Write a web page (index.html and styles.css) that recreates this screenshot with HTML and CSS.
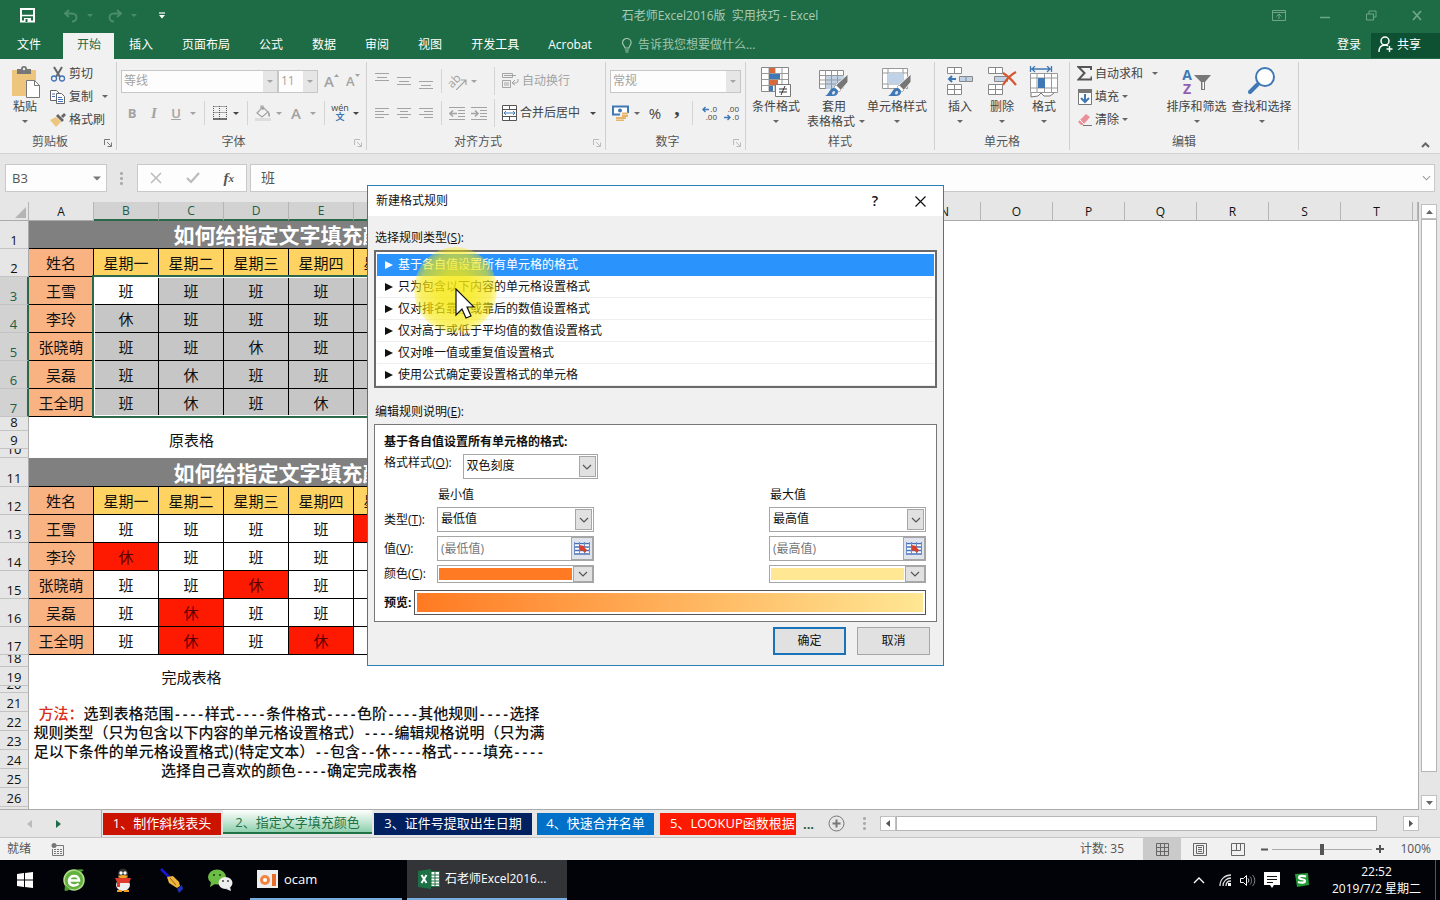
FILE: index.html
```html
<!DOCTYPE html>
<html lang="zh-CN">
<head>
<meta charset="utf-8">
<title>石老师Excel2016版 实用技巧 - Excel</title>
<link rel="stylesheet" href="styles.css">
</head>
<body>
<svg class="defs" aria-hidden="true">
  <symbol id="down" viewBox="0 0 6 3"><path d="M0 0h6L3 3z" fill="currentColor"/></symbol>
  <symbol id="chev" viewBox="0 0 10 6"><path d="M1 1l4 4 4-4" fill="none" stroke="currentColor" stroke-width="1.2"/></symbol>
  <symbol id="launch" viewBox="0 0 8 8"><path d="M.5 6V.5H6M3 3l4 4M7.500 3.500v4h-4" fill="none" stroke="currentColor"/></symbol>
  <symbol id="brushtip" viewBox="0 0 30 32"><path d="M29 8v8l-7 8-5-5z" fill="#777" stroke="#f1f1f1"/><path d="M17 19l5 5-2 2-5-5z" fill="#fff" stroke="#888" stroke-width=".6"/><path d="M6 30c4-1 4-8 9-8 6 1 5 8-1 8z" fill="#3f78b4"/><path d="M13 27c1-3 4-2 3 0s-3 2-3 0" fill="#d5e4f2"/></symbol>
  <symbol id="pickgrid" viewBox="0 0 16 14"><path d="M0 0h16v13H0z" fill="#fff"/><path d="M0 1.500h16M0 5h16M0 8.500h16M0 12h16" stroke="#4570b8" stroke-width="1.500"/><path d="M.5 0v13M5.500 0v13M10.500 0v13M15.500 0v13" stroke="#6b8cc4"/><path d="M5 3l6 1-1 1 3 3-2 3-3-3-2 1z" fill="#d8402b"/></symbol>
</svg>

<header class="top">
  <div class="titlebar">
    <div class="quick">
      <button aria-label="保存"><svg width="15" height="15" viewBox="0 0 15 15"><path d="M1 1h13v12.500H1z" fill="none" stroke="#fff" stroke-width="2"/><path d="M2 7.500h11" stroke="#fff" stroke-width="1.500"/><path d="M4 10h7v4H4z" fill="#fff"/><path d="M5.500 11h2v3h-2z" fill="#1e6c45"/></svg></button>
      <button class="dim" aria-label="撤消"><svg width="16" height="14" viewBox="0 0 16 14"><path d="M6 1L2 4.500 6 8M2 4.500h7c6 0 6 8 0 8" fill="none" stroke="currentColor" stroke-width="2"/></svg><svg class="dn"><use href="#down"/></svg></button>
      <button class="dim" aria-label="恢复"><svg width="16" height="14" viewBox="0 0 16 14"><path d="M10 1l4 3.500L10 8M14 4.500H7c-6 0-6 8 0 8" fill="none" stroke="currentColor" stroke-width="2"/></svg><svg class="dn"><use href="#down"/></svg></button>
      <button class="more" aria-label="自定义快速访问工具栏"><svg width="6" height="7" viewBox="0 0 6 7"><path d="M0 1h6" stroke="#fff" stroke-width="1.200"/><path d="M0 3h6L3 6.500z" fill="#fff"/></svg></button>
    </div>
    <h1>石老师Excel2016版&nbsp; 实用技巧 - Excel</h1>
    <div class="wincontrols">
      <button aria-label="功能区显示选项"><svg width="14" height="11" viewBox="0 0 14 11"><path d="M.5.5h13v10H.5zM.5 2.500h13M7 9V4M4.500 6.500L7 4l2.500 2.500" fill="none" stroke="currentColor"/></svg></button>
      <button aria-label="最小化"><svg width="10" height="11" viewBox="0 0 10 11"><path d="M0 7.500h10" stroke="currentColor" stroke-width="1.500"/></svg></button>
      <button aria-label="还原"><svg width="11" height="11" viewBox="0 0 11 11"><path d="M.5 4h7v6h-7zM3 4V1h7v6H7.500" fill="none" stroke="currentColor"/></svg></button>
      <button aria-label="关闭"><svg width="10" height="11" viewBox="0 0 10 11"><path d="M1 1l8 9M9 1L1 10" stroke="currentColor" stroke-width="1.800"/></svg></button>
    </div>
  </div>
  <nav class="tabs">
    <button class="file">文件</button><button class="on">开始</button><button>插入</button><button>页面布局</button><button>公式</button><button>数据</button><button>审阅</button><button>视图</button><button>开发工具</button><button>Acrobat</button>
    <button class="tell"><svg width="12" height="15" viewBox="0 0 12 15"><path d="M4 10C4 8 1.500 7 1.500 4.800a4.300 4.300 0 0 1 8.600 0C10 7 8 8 8 10zM4 12h4M4.500 14h3" fill="none" stroke="currentColor" stroke-width="1.200"/></svg>告诉我您想要做什么...</button>
    <button class="login">登录</button>
    <button class="share"><svg width="16" height="17" viewBox="0 0 16 17"><circle cx="7" cy="5" r="4" fill="none" stroke="#fff" stroke-width="1.500"/><path d="M1 16c0-4 2-7 6-7 1.500 0 2.500.5 3 1M11.500 10v6M8.500 13h6" fill="none" stroke="#fff" stroke-width="1.400"/></svg>共享</button>
  </nav>
</header>

<section class="ribbon">
  <div class="group g1">
    <div class="body">
      <button class="big paste"><svg width="30" height="32" viewBox="0 0 30 32"><path d="M2 4h24v26H2z" fill="#edc57d"/><path d="M7 3h14v5H7z" fill="#777"/><circle cx="14" cy="3" r="3" fill="#777"/><circle cx="14" cy="3" r="1.200" fill="#f1f1f1"/><path d="M16.500 14.500h8l5 5v12h-13z" fill="#fff" stroke="#777"/><path d="M24.500 14.500v5h5" fill="none" stroke="#777"/></svg><span>粘贴</span><svg class="dn"><use href="#down"/></svg></button>
      <div class="stack">
        <button><svg width="16" height="16" viewBox="0 0 16 16"><path d="M4 1l6 10M12 1L6 11" stroke="#666" stroke-width="2"/><circle cx="4" cy="12.500" r="2.500" fill="none" stroke="#4472b8" stroke-width="1.300"/><circle cx="12" cy="12.500" r="2.500" fill="none" stroke="#4472b8" stroke-width="1.300"/></svg>剪切</button>
        <button><svg width="16" height="16" viewBox="0 0 16 16"><path d="M.5 1.500h6l3 3v7h-9z" fill="#fff" stroke="#666"/><path d="M6.500 4.500h5l3 3v7h-8z" fill="#fff" stroke="#666"/><path d="M2 5h3M2 7.500h3M8 8.500h4M8 10.500h5M8 12.500h5" stroke="#4472b8"/></svg>复制<svg class="dn far"><use href="#down"/></svg></button>
        <button><svg width="16" height="16" viewBox="0 0 16 16"><path d="M0 8l6-3 5 5-5 5z" fill="#edc57d"/><path d="M6 4l2-2 6 6-2 2zM11 4l3-3 2 2-3 3z" fill="#666"/></svg>格式刷</button>
      </div>
    </div>
    <div class="cap">剪贴板<svg class="la"><use href="#launch"/></svg></div>
  </div>

  <div class="group g2">
    <div class="body rows off">
      <div class="line">
        <span class="combo font"><input aria-label="字体" value="等线"><i><svg class="dn"><use href="#down"/></svg></i></span><span class="combo size"><input aria-label="字号" value="11"><i><svg class="dn"><use href="#down"/></svg></i></span>
        <button class="grow" aria-label="增大字号">A<svg width="5" height="3" viewBox="0 0 5 3"><path d="M0 3h5L2.500 0z" fill="currentColor"/></svg></button>
        <button class="grow less" aria-label="减小字号">A<svg width="5" height="3" viewBox="0 0 5 3"><path d="M0 0h5L2.500 3z" fill="currentColor"/></svg></button>
      </div>
      <div class="line">
        <button class="w22"><b>B</b></button><button class="w22 ital">I</button><button class="w22 semi13"><u>U</u></button><button class="w12" aria-label="下划线"><svg class="dn"><use href="#down"/></svg></button><i class="sep m5"></i>
        <button class="w20 live" aria-label="边框"><svg width="14" height="14" viewBox="0 0 14 14"><path d="M.5.5h13M.5 6.500h13M.5 0v13M6.500 0v13M13.500 0v13" stroke="#555" stroke-dasharray="1 1" fill="none"/><path d="M0 13h14" stroke="#444" stroke-width="1.500"/></svg></button><button class="w12 live" aria-label="边框选项"><svg class="dn"><use href="#down"/></svg></button><i class="sep m5"></i>
        <button class="w20" aria-label="填充颜色"><svg width="16" height="16" viewBox="0 0 16 16"><path d="M2 8l6-6 5 5-6 5zM6 5V1h2v4" fill="none" stroke="currentColor" stroke-width="1.200"/><path d="M13 6c2 2 3 5 1 6-1-1-1-3-1-6z" fill="currentColor"/><path d="M0 13h16v3H0z" fill="#ddd"/></svg></button><button class="w12" aria-label="填充选项"><svg class="dn"><use href="#down"/></svg></button>
        <button class="w22 semi">A</button><button class="w12" aria-label="字体颜色"><svg class="dn"><use href="#down"/></svg></button><i class="sep m5"></i>
        <button class="w20 live wen"><span>wén</span><em>文</em></button><button class="w12 live" aria-label="拼音选项"><svg class="dn"><use href="#down"/></svg></button>
      </div>
    </div>
    <div class="cap">字体<svg class="la dimla"><use href="#launch"/></svg></div>
  </div>

  <div class="group g3">
    <div class="body rows off">
      <div class="line">
        <button class="w22" aria-label="顶端对齐"><svg width="14" height="16"><path d="M0 .5h14M2 4.500h10M0 7.500h14" stroke="currentColor"/></svg></button><button class="w22" aria-label="垂直居中"><svg width="14" height="16"><path d="M0 4.500h14M2 8.500h10M0 11.500h14" stroke="currentColor"/></svg></button><button class="w22" aria-label="底端对齐"><svg width="14" height="16"><path d="M0 8.500h14M2 12.500h10M0 15.500h14" stroke="currentColor"/></svg></button><i class="sep m4"></i>
        <button class="w44" aria-label="方向"><span class="slant">ab</span><svg class="slantarrow" width="11" height="11" viewBox="0 0 11 11"><path d="M0 11L10 1M5 1h5v5" fill="none" stroke="currentColor" stroke-width="1.200"/></svg><svg class="dn"><use href="#down"/></svg></button><i class="sep m4 tall"></i>
        <button class="txt"><svg width="17" height="16" viewBox="0 0 17 16"><path d="M.5.500h10v4H.5zM.5 7.500h8v7h-8zM2 2.500h12M2 10h5M2 12h5M16 6v2c0 2-2 2-5 2M13 7l-3 3 3 2" fill="none" stroke="currentColor"/></svg>自动换行</button>
      </div>
      <div class="line">
        <button class="w22" aria-label="左对齐"><svg width="14" height="12"><path d="M0 1.500h14M0 4.500h9M0 7.500h14M0 10.500h9" stroke="currentColor"/></svg></button><button class="w22" aria-label="居中"><svg width="14" height="12"><path d="M0 1.500h14M3 4.500h8M0 7.500h14M3 10.500h8" stroke="currentColor"/></svg></button><button class="w22" aria-label="右对齐"><svg width="14" height="12"><path d="M0 1.500h14M5 4.500h9M0 7.500h14M5 10.500h9" stroke="currentColor"/></svg></button><i class="sep m4"></i>
        <button class="w22" aria-label="减少缩进"><svg width="16" height="13"><path d="M0 .5h16M9 3.500h7M9 6.500h7M9 9.500h7M0 12.500h16" stroke="currentColor"/><path d="M1 6.500h7M4 3.500l-3 3 3 3" stroke="currentColor" stroke-width="1.600" fill="none"/></svg></button><button class="w22" aria-label="增加缩进"><svg width="16" height="13"><path d="M0 .5h16M9 3.500h7M9 6.500h7M9 9.500h7M0 12.500h16" stroke="currentColor"/><path d="M0 6.500h7M4 3.500l3 3-3 3" stroke="currentColor" stroke-width="1.600" fill="none"/></svg></button><i class="sep m4 tall"></i>
        <button class="txt live"><svg width="15" height="16" viewBox="0 0 15 16"><path d="M.5.500h14v15H.5zM.5 4.500h14M.5 11.500h14M7.500.5v4M7.500 11.500v4" fill="#fff" stroke="#555"/><path d="M2 8h11M4 6L2 8l2 2M11 6l2 2-2 2" fill="none" stroke="#3f78b4"/></svg>合并后居中<svg class="dn far"><use href="#down"/></svg></button>
      </div>
    </div>
    <div class="cap">对齐方式<svg class="la dimla"><use href="#launch"/></svg></div>
  </div>

  <div class="group g4">
    <div class="body rows">
      <div class="line off"><span class="combo num"><input aria-label="数字格式" value="常规"><i><svg class="dn"><use href="#down"/></svg></i></span></div>
      <div class="line">
        <button class="w22" aria-label="会计数字格式"><svg width="18" height="16" viewBox="0 0 18 16"><path d="M1 1.500h15v8H1z" fill="#fff" stroke="#3f78b4" stroke-width="2"/><circle cx="8" cy="5.500" r="2" fill="#3f78b4"/><path d="M8 8h9v8H4v-5h4z" fill="#f1f1f1"/><path d="M10 8.500h6M10 11h6M4 13h10M4 15.500h8" stroke="#e5b56b" stroke-width="1.800"/></svg></button><button class="w10" aria-label="会计选项"><svg class="dn"><use href="#down"/></svg></button><button class="w26 pct">%</button><button class="w18 comma">,</button><i class="sep m6"></i>
        <button class="w20 dec" aria-label="增加小数位数"><span><svg width="7" height="7" viewBox="0 0 7 7"><path d="M1 3.500h6M3.500 1L1 3.500 3.500 6" stroke="#3f78b4" fill="none" stroke-width="1.400"/></svg>.0</span><span>.00</span></button><button class="w22 dec" aria-label="减少小数位数"><span>.00</span><span><svg width="7" height="7" viewBox="0 0 7 7"><path d="M0 3.500h6M3.500 1L6 3.500 3.500 6" stroke="#3f78b4" fill="none" stroke-width="1.400"/></svg>.0</span></button>
      </div>
    </div>
    <div class="cap">数字<svg class="la dimla"><use href="#launch"/></svg></div>
  </div>

  <div class="group g5">
    <div class="body">
      <button class="big b60"><svg width="30" height="32" viewBox="0 0 30 32"><path d="M.5 1.500h27v24H.5z" fill="#fff" stroke="#888"/><path d="M.5 7.500h27M.5 13.500h27M.5 19.500h27M8 1.500v24M14 1.500v24M21 1.500v24" stroke="#999" fill="none"/><path d="M8 2h6v5H8zM8 14h9v5H8z" fill="#d8693c"/><path d="M8 8h11v5H8zM8 20h4v5H8z" fill="#3f78b4"/><path d="M14.500 18.500h15v12h-15z" fill="#fff" stroke="#777"/><path d="M18 23h8M18 26h8M24 20l-4 9" stroke="#333"/></svg><span>条件格式</span><svg class="dn"><use href="#down"/></svg></button>
      <button class="big b56"><svg width="30" height="32" viewBox="0 0 30 32"><path d="M.5 4.500h24v18H.5z" fill="#fff" stroke="#888"/><path d="M7 9h18v14H7z" fill="#c0d2e6"/><path d="M.5 9.500h24M.5 14h24M.5 18h24M6.500 4v19M12.500 4v19M18.500 4v19" stroke="#999" fill="none"/><use href="#brushtip" width="30" height="32"/></svg><span>套用</span><span class="second">表格格式<svg class="dn"><use href="#down"/></svg></span></button>
      <button class="big b70"><svg width="30" height="32" viewBox="0 0 30 32"><path d="M.5 2.500h25v20H.5zM.5 7h25M.5 18h25M6 2.500v20M21 2.500v20" fill="#fff" stroke="#999"/><path d="M6 7h15v11H6z" fill="#c0d2e6"/><use href="#brushtip" width="30" height="32"/></svg><span>单元格样式</span><svg class="dn"><use href="#down"/></svg></button>
    </div>
    <div class="cap">样式</div>
  </div>

  <div class="group g6">
    <div class="body">
      <button class="big b42"><svg width="28" height="32" viewBox="0 0 28 32"><path d="M1.500 1.500h14v6h-14zM8.500 1.500v6M1.500 18.500h14v10h-14zM8.500 18.500v10M1.500 23.500h14" fill="#fff" stroke="#888"/><path d="M13.500 10.500h13v5h-13zM20 10.500v5" fill="#c0d2e6" stroke="#888"/><path d="M3 13h7M6 10l-3 3 3 3" stroke="#3f78b4" stroke-width="2" fill="none"/></svg><span>插入</span><svg class="dn"><use href="#down"/></svg></button>
      <button class="big b42"><svg width="30" height="32" viewBox="0 0 30 32"><path d="M1.500 1.500h14v6h-14zM8.500 1.500v6M1.500 18.500h14v10h-14zM8.500 18.500v10M1.500 23.500h14" fill="#fff" stroke="#888"/><path d="M7.500 10.500h13v5h-13z" fill="#c0d2e6" stroke="#888"/><path d="M16 7c5 3 9 7 13 12M29 6c-6 3-10 8-13 13" stroke="#d8562f" stroke-width="2.200" fill="none"/></svg><span>删除</span><svg class="dn"><use href="#down"/></svg></button>
      <button class="big b42"><svg width="30" height="32" viewBox="0 0 30 32"><path d="M1.500 0v6M22.500 0v6M2 3h20M6 0L3 3l3 3M18 0l3 3-3 3" fill="none" stroke="#3f78b4" stroke-width="1.300"/><path d="M1.500 7.500h27v19h-27zM8 7.500v19M15.500 7.500v19M22.500 7.500v19M1.500 12h27M1.500 22h27" fill="#fff" stroke="#999"/><path d="M9 12h7v10H9z" fill="#3f78b4"/><path d="M2 27v4l7-1 3-3 3 3h6l4-3" fill="#fff" stroke="#777"/></svg><span>格式</span><svg class="dn"><use href="#down"/></svg></button>
    </div>
    <div class="cap">单元格</div>
  </div>

  <div class="group g7">
    <div class="body">
      <div class="stack wide">
        <button><svg width="15" height="15" viewBox="0 0 15 15"><path d="M14 4V1H1.500l6 6-6 6.500H14.500v-3" fill="none" stroke="#555" stroke-width="2"/></svg>自动求和<svg class="dn far"><use href="#down"/></svg></button>
        <button><svg width="15" height="16" viewBox="0 0 15 16"><path d="M1.500.5h13v15h-13z" fill="#fff" stroke="#777"/><path d="M1 0h14v4H1z" fill="#777"/><path d="M8 5v8M4 9l4 4 4-4" fill="none" stroke="#3f78b4" stroke-width="2"/></svg>填充<svg class="dn"><use href="#down"/></svg></button>
        <button><svg width="15" height="14" viewBox="0 0 15 14"><path d="M1 9l8-8 4 3-7 8H4z" fill="#e9919a"/><path d="M3 7l4 4" stroke="#fff"/><path d="M6 12.500h9" stroke="#777"/></svg>清除<svg class="dn"><use href="#down"/></svg></button>
      </div>
      <button class="big b65"><span class="sorticon"><span class="az"><b>A</b><b>Z</b></span><svg width="17" height="17" viewBox="0 0 17 17"><path d="M0 1h17l-6 7v8H7V8z" fill="#777"/><path d="M8.500 8h1.500v7H8.500z" fill="#fff"/></svg></span><span>排序和筛选</span><svg class="dn"><use href="#down"/></svg></button>
      <button class="big b65"><svg width="30" height="32" viewBox="0 0 30 32"><circle cx="18" cy="11" r="9" fill="#fff" stroke="#3f78b4" stroke-width="2"/><path d="M11 18l-8 8" stroke="#3f78b4" stroke-width="4" stroke-linecap="round"/></svg><span>查找和选择</span><svg class="dn"><use href="#down"/></svg></button>
    </div>
    <div class="cap">编辑</div>
  </div>
  <button class="collapse" aria-label="折叠功能区"><svg width="9" height="6" viewBox="0 0 9 6"><path d="M1 5l3.500-3.500L8 5" fill="none" stroke="#666" stroke-width="2"/></svg></button>
</section>

<section class="formula">
  <div class="namebox"><input aria-label="名称框" value="B3"><svg width="8" height="5"><use href="#down"/></svg></div>
  <span class="dots"></span>
  <div class="fx">
    <button aria-label="取消输入"><svg width="12" height="12"><path d="M1 1l10 10M11 1L1 11" stroke="#bbb" stroke-width="1.500"/></svg></button>
    <button aria-label="输入"><svg width="14" height="12"><path d="M1 6l4 4 8-9" fill="none" stroke="#bbb" stroke-width="2.200"/></svg></button>
    <button class="fn">f<sub>x</sub></button>
  </div>
  <div class="entry"><input aria-label="编辑栏" value="班"><svg width="9" height="6"><use href="#chev"/></svg></div>
</section>

<main class="work">
  <div class="sheet">
    <table>
      <colgroup><col class="c0"><col class="c1" span="8"><col class="c2" span="12"><col></colgroup>
      <thead><tr>
        <th class="corner"><svg width="11" height="11"><path d="M11 0v11H0z" fill="#b5b5b5"/></svg></th><th>A</th><th class="sel">B</th><th class="sel">C</th><th class="sel">D</th><th class="sel">E</th><th class="sel"></th><th class="sel"></th><th class="sel"></th><th></th><th></th><th></th><th></th><th></th><th>N</th><th>O</th><th>P</th><th>Q</th><th>R</th><th>S</th><th>T</th><th></th>
      </tr></thead>
      <tbody>
        <tr class="h28"><th><div>1</div></th><td class="title" colspan="8">如何给指定文字填充颜色</td></tr>
        <tr class="h28 head"><th><div>2</div></th><td>姓名</td><td>星期一</td><td>星期二</td><td>星期三</td><td>星期四</td><td>星期五</td><td></td><td></td></tr>
        <tr class="h28 pick"><th><div>3</div></th><td>王雪</td><td class="active">班</td><td>班</td><td>班</td><td>班</td><td></td><td></td><td></td></tr>
        <tr class="h28 pick"><th><div>4</div></th><td>李玲</td><td>休</td><td>班</td><td>班</td><td>班</td><td></td><td></td><td></td></tr>
        <tr class="h28 pick"><th><div>5</div></th><td>张晓萌</td><td>班</td><td>班</td><td>休</td><td>班</td><td></td><td></td><td></td></tr>
        <tr class="h28 pick"><th><div>6</div></th><td>吴磊</td><td>班</td><td>休</td><td>班</td><td>班</td><td></td><td></td><td></td></tr>
        <tr class="h28 pick"><th><div>7</div></th><td>王全明</td><td>班</td><td>休</td><td>班</td><td>休</td><td></td><td></td><td></td></tr>
        <tr class="h14"><th><div>8</div></th></tr>
        <tr class="h18"><th><div>9</div></th><td class="note" colspan="5">原表格</td></tr>
        <tr class="h9"><th><div>10</div></th></tr>
        <tr class="h29"><th><div>11</div></th><td class="title" colspan="8">如何给指定文字填充颜色</td></tr>
        <tr class="h28 head"><th><div>12</div></th><td>姓名</td><td>星期一</td><td>星期二</td><td>星期三</td><td>星期四</td><td>星期五</td><td></td><td></td></tr>
        <tr class="h28 data"><th><div>13</div></th><td>王雪</td><td>班</td><td>班</td><td>班</td><td>班</td><td class="rest"></td><td></td><td></td></tr>
        <tr class="h28 data"><th><div>14</div></th><td>李玲</td><td class="rest">休</td><td>班</td><td>班</td><td>班</td><td></td><td></td><td></td></tr>
        <tr class="h28 data"><th><div>15</div></th><td>张晓萌</td><td>班</td><td>班</td><td class="rest">休</td><td>班</td><td></td><td></td><td></td></tr>
        <tr class="h28 data"><th><div>16</div></th><td>吴磊</td><td>班</td><td class="rest">休</td><td>班</td><td>班</td><td></td><td></td><td></td></tr>
        <tr class="h28 data"><th><div>17</div></th><td>王全明</td><td>班</td><td class="rest">休</td><td>班</td><td class="rest">休</td><td></td><td></td><td></td></tr>
        <tr class="h12"><th><div>18</div></th></tr>
        <tr class="h19"><th><div>19</div></th><td class="note" colspan="5">完成表格</td></tr>
        <tr class="h7"><th><div>20</div></th></tr>
        <tr class="h19"><th><div>21</div></th><td class="method" colspan="8" rowspan="5"><span class="red">方法：</span>选到表格范围<i>----</i>样式<i>----</i>条件格式<i>----</i>色阶<i>----</i>其他规则<i>----</i>选择<br>规则类型（只为包含以下内容的单元格设置格式）<i>----</i>编辑规格说明（只为满<br>足以下条件的单元格设置格式)(特定文本）<i>--</i>包含<i>--</i>休<i>----</i>格式<i>----</i>填充<i>----</i><br>选择自己喜欢的颜色<i>----</i>确定完成表格</td></tr>
        <tr class="h19"><th><div>22</div></th></tr>
        <tr class="h19"><th><div>23</div></th></tr>
        <tr class="h19"><th><div>24</div></th></tr>
        <tr class="h19"><th><div>25</div></th></tr>
        <tr class="h19"><th><div>26</div></th></tr>
        <tr class="h19"><th><div></div></th></tr>
      </tbody>
    </table>
    <div class="selection"></div>
  </div>
  <div class="vscroll">
    <button aria-label="向上滚动"><svg width="7" height="4" viewBox="0 0 7 4"><path d="M0 4h7L3.500 0z" fill="#666"/></svg></button>
    <div class="thumb"></div>
    <button aria-label="向下滚动"><svg width="7" height="4" viewBox="0 0 7 4"><path d="M0 0h7L3.500 4z" fill="#666"/></svg></button>
  </div>
</main>

<nav class="sheets">
  <div class="arrows"><button aria-label="上一张"><svg width="5" height="8"><path d="M5 0v8L0 4z" fill="#bbb"/></svg></button><button aria-label="下一张"><svg width="5" height="8"><path d="M0 0v8l5-4z" fill="#1e6c45"/></svg></button></div>
  <button class="st s1">1、制作斜线表头</button><button class="st s2">2、指定文字填充颜色</button><button class="st s3">3、证件号提取出生日期</button><button class="st s4">4、快速合并名单</button><button class="st s5">5、LOOKUP函数根据</button>
  <button class="ell">...</button>
  <button class="add" aria-label="新工作表"><svg width="17" height="17"><circle cx="8.500" cy="8.500" r="7.500" fill="none" stroke="#777"/><path d="M8.500 4.500v8M4.500 8.500h8" stroke="#777" stroke-width="2"/></svg></button>
  <span class="dots"></span>
  <div class="hscroll">
    <button aria-label="向左滚动"><svg width="4" height="7"><path d="M4 0v7L0 3.500z" fill="#555"/></svg></button><div class="thumb"></div><button aria-label="向右滚动"><svg width="4" height="7"><path d="M0 0v7l4-3.500z" fill="#555"/></svg></button>
  </div>
</nav>

<footer class="status">
  <span>就绪</span>
  <svg class="macro" width="13" height="13" viewBox="0 0 13 13"><path d="M4 2.500h8.500v10H1.500V6" fill="none" stroke="#777"/><circle cx="3" cy="2.500" r="2.500" fill="#777"/><path d="M3 6.500h8M3 8.500h8M3 10.500h8" stroke="#777" stroke-dasharray="2 1"/></svg>
  <span class="count">计数: 35</span>
  <button class="view on" aria-label="普通"><svg width="13" height="13"><path d="M.5.500h12v12H.5zM4.500.5v12M8.500.5v12M.5 4.500h12M.5 8.500h12" fill="none" stroke="#666"/></svg></button>
  <button class="view" aria-label="页面布局"><svg width="14" height="13"><path d="M.5.500h13v12H.5zM3.500 2.500h7v8h-7zM5 4.500h4M5 6.500h4M5 8.500h4" fill="none" stroke="#666"/></svg></button>
  <button class="view" aria-label="分页预览"><svg width="14" height="13"><path d="M.5.500h13v12H.5zM5.500.5v7M9.500.5v7h-9" fill="none" stroke="#666"/></svg></button>
  <button class="zoom" aria-label="缩小"><svg width="7" height="7"><path d="M0 3.500h7" stroke="#555" stroke-width="2"/></svg></button>
  <input class="range" type="range" aria-label="缩放" min="0" max="100" value="50">
  <button class="zoom" aria-label="放大"><svg width="8" height="8"><path d="M0 4h8M4 0v8" stroke="#555" stroke-width="2"/></svg></button>
  <span class="pc">100%</span>
</footer>

<footer class="taskbar">
  <button class="app" aria-label="开始"><svg width="16" height="16"><path d="M0 2l7-1v6.500H0zM8 1l8-1v7.500H8zM0 8.500h7V15l-7-1zM8 8.500h8V16l-8-1z" fill="#fff"/></svg></button>
  <button class="app" aria-label="浏览器"><svg width="24" height="24" viewBox="0 0 24 24"><circle cx="12" cy="12" r="10" fill="#62b13e"/><circle cx="12" cy="12" r="10" fill="none" stroke="#b5e08c" stroke-width="1.500"/><path d="M7 12.500h10c0-6-9-6-10 0 0 6 7 6 9.500 3" fill="none" stroke="#fff" stroke-width="2.600"/><path d="M14 2c3-1 6-1 8 0-1 1-2 1-3 2" fill="#4ba32e"/><path d="M3 17c0 3-1 5 0 6 2 0 4-1 5-2" fill="#4ba32e"/></svg></button>
  <button class="app" aria-label="QQ"><svg width="20" height="24" viewBox="0 0 20 24"><ellipse cx="10" cy="17" rx="7" ry="6" fill="#eee"/><path d="M5 6c0-7 10-7 10 0v4H5z" fill="#333"/><circle cx="8" cy="5" r="1.700" fill="#fff"/><circle cx="12" cy="5" r="1.700" fill="#fff"/><ellipse cx="10" cy="8.500" rx="4.500" ry="1.500" fill="#f5a623"/><path d="M2 10h16l-2 5H7v4H4v-5z" fill="#e03a2c"/><path d="M4 22h5v2H4zM11 22h5v2h-5z" fill="#f09c22"/></svg></button>
  <button class="app" aria-label="画笔"><svg width="24" height="25" viewBox="0 0 24 25"><path d="M1 1l11 11" stroke="#1717d8" stroke-width="2.500"/><path d="M7 9l6-1 6 6 1 4-3 2-8-5z" fill="#eeb63c"/><path d="M10 10l6 7" stroke="#96601c"/><path d="M17 21l5-4 1 4-4 4z" fill="#1e32bd"/></svg></button>
  <button class="app" aria-label="微信"><svg width="25" height="22" viewBox="0 0 25 22"><ellipse cx="9" cy="8" rx="9" ry="7.500" fill="#6cbd45"/><path d="M3 13l-1 5 5-3" fill="#6cbd45"/><ellipse cx="17.500" cy="14" rx="7" ry="6" fill="#eee"/><path d="M22 18l1 4-5-2" fill="#eee"/><circle cx="6" cy="6" r="1" fill="#183816"/><circle cx="12" cy="6" r="1" fill="#183816"/><circle cx="15" cy="12" r="1" fill="#444"/><circle cx="20" cy="12" r="1" fill="#444"/></svg></button>
  <button class="task ocam"><svg width="21" height="18" viewBox="0 0 21 18"><path d="M0 0h21v18H0z" fill="#eee"/><circle cx="8" cy="10" r="5" fill="#f18443"/><circle cx="8" cy="10" r="2" fill="#fff"/><path d="M15 4h4v12h-4z" fill="#e46d2c"/></svg>ocam</button>
  <button class="task excel"><svg width="22" height="20" viewBox="0 0 22 20"><path d="M0 2l13-2v20L0 18z" fill="#1e7145"/><path d="M13 2.500h8.500v15H13z" fill="#fff" stroke="#1e7145"/><path d="M13 6h8M13 9h8M13 12h8M13 15h8M17 3v14" stroke="#1e7145"/><path d="M3.500 6l5 8M8.500 6l-5 8" stroke="#fff" stroke-width="2"/></svg>石老师Excel2016...</button>
  <div class="tray">
    <svg width="12" height="7"><path d="M1 6l5-5 5 5" fill="none" stroke="#fff" stroke-width="1.300"/></svg>
    <svg class="wifi" width="13" height="13"><path d="M1 12C1 5 6 1 12 1M4 12c0-5 4-8 8-8M7 12c0-3 2-5 5-5" fill="none" stroke="#ddd" stroke-width="1.300"/><path d="M9 9h3v3H9z" fill="#fff"/></svg>
    <svg width="16" height="13"><path d="M.5 4.500h3l3-3v10l-3-3h-3z" fill="none" stroke="#fff"/><path d="M8 4.500c1 1 1 3 0 4" fill="none" stroke="#fff"/><path d="M10 2.500c2 2 2 6 0 8M12.500 1c3 3 3 8 0 11" fill="none" stroke="#888"/></svg>
    <svg width="16" height="16"><path d="M0 0h16v13h-6l-2 3-2-3H0z" fill="#fff"/><path d="M3 4.500h10M3 7.500h10M3 10.500h6" stroke="#111"/></svg>
    <svg class="sogou" width="16" height="16" viewBox="0 0 16 16"><path d="M1 2l13-1 1 12-12 2z" fill="#239a36"/><path d="M12 4.500c-3-1-7-1-7 1 0 2.500 6 1 6 3.500 0 2-4 2-7 1" fill="none" stroke="#fff" stroke-width="2.200"/></svg>
    <div class="clock"><span>22:52</span><span>2019/7/2 星期二</span></div>
  </div>
</footer>

<section class="dialog" role="dialog" aria-labelledby="dlg">
  <div class="dtitle"><h2 id="dlg">新建格式规则</h2><button class="help">?</button><button aria-label="关闭"><svg width="11" height="11"><path d="M.5.500l10 10M10.500.500l-10 10" stroke="#111" stroke-width="1.200"/></svg></button></div>
  <div class="dbody">
    <p class="lab" id="types">选择规则类型(<u>S</u>):</p>
    <ul class="rules" aria-labelledby="types">
      <li class="cur"><svg width="8" height="8"><path d="M0 0l8 4-8 4z" fill="currentColor"/></svg>基于各自值设置所有单元格的格式</li>
      <li><svg width="8" height="8"><path d="M0 0l8 4-8 4z" fill="currentColor"/></svg>只为包含以下内容的单元格设置格式</li>
      <li><svg width="8" height="8"><path d="M0 0l8 4-8 4z" fill="currentColor"/></svg>仅对排名靠前或靠后的数值设置格式</li>
      <li><svg width="8" height="8"><path d="M0 0l8 4-8 4z" fill="currentColor"/></svg>仅对高于或低于平均值的数值设置格式</li>
      <li><svg width="8" height="8"><path d="M0 0l8 4-8 4z" fill="currentColor"/></svg>仅对唯一值或重复值设置格式</li>
      <li><svg width="8" height="8"><path d="M0 0l8 4-8 4z" fill="currentColor"/></svg>使用公式确定要设置格式的单元格</li>
    </ul>
    <p class="lab second">编辑规则说明(<u>E</u>):</p>
    <div class="panel">
      <h3>基于各自值设置所有单元格的格式:</h3>
      <div class="stylerow"><label for="fmt">格式样式(<u>O</u>):</label><span class="pickbox"><select id="fmt"><option>双色刻度</option></select><i><svg width="10" height="6"><use href="#chev"/></svg></i></span></div>
      <div class="form">
        <span></span><span class="colhead">最小值</span><span class="colhead max">最大值</span>
        <label for="tmin">类型(<u>T</u>):</label>
        <span class="pickbox"><select id="tmin"><option>最低值</option></select><i><svg width="10" height="6"><use href="#chev"/></svg></i></span>
        <span class="pickbox max"><select aria-label="最大值类型"><option>最高值</option></select><i><svg width="10" height="6"><use href="#chev"/></svg></i></span>
        <label for="vmin">值(<u>V</u>):</label>
        <span class="refbox"><input id="vmin" value="(最低值)" disabled><button aria-label="选择单元格"><svg width="16" height="14"><use href="#pickgrid"/></svg></button></span>
        <span class="refbox max"><input aria-label="最大值" value="(最高值)" disabled><button aria-label="选择单元格"><svg width="16" height="14"><use href="#pickgrid"/></svg></button></span>
        <label for="cmin">颜色(<u>C</u>):</label>
        <button id="cmin" class="color"><b class="orange"></b><i><svg width="10" height="6"><use href="#chev"/></svg></i></button>
        <button class="color max" aria-label="最大值颜色"><b class="yellow"></b><i><svg width="10" height="6"><use href="#chev"/></svg></i></button>
      </div>
      <div class="preview"><strong>预览:</strong><div><span></span></div></div>
    </div>
    <div class="actions"><button class="ok">确定</button><button>取消</button></div>
  </div>
  <div class="halo"></div>
  <svg class="cursor" width="20" height="32" viewBox="0 0 20 32"><path d="M1 1v26l6-6 4 9 5-2-4-9h7z" fill="#fff" stroke="#111" stroke-width="1.200"/></svg>
</section>
</body>
</html>
```
FILE: styles.css
```css
* { box-sizing: border-box; }
html, body { height: 100%; }
body {
  margin: 0;
  display: flex;
  flex-direction: column;
  position: relative;
  overflow: hidden;
  background: #e6e6e6;
  color: #444;
  font: 12px/16px "Open Sans", "Noto Sans CJK SC", sans-serif;
}
button, input, select { font: inherit; color: inherit; border: 0; background: none; padding: 0; margin: 0; border-radius: 0; }
button { display: inline-flex; align-items: center; justify-content: center; white-space: nowrap; }
h1, h2, h3, p, ul { margin: 0; padding: 0; font: inherit; }
svg { flex: none; display: block; }
.defs { position: absolute; width: 0; height: 0; }
.dn { width: 6px; height: 3px; color: #666; }

/* title bar and tabs */
.top { background: #1e6c45; color: #fff; }
.titlebar { display: grid; grid-template-columns: 1fr auto 1fr; height: 33px; align-items: center; padding-bottom: 2px; }
.titlebar h1 { color: #a9cbb8; white-space: nowrap; }
.quick, .wincontrols { display: flex; }
.quick { padding-left: 20px; }
.quick .dim { color: #4b8c6a; margin-left: 28px; gap: 8px; }
.quick .dim .dn { color: #4b8c6a; }
.quick .dim + .dim { margin-left: 14px; }
.quick .more { margin-left: 22px; }
.wincontrols { justify-content: flex-end; color: #6fa588; }
.wincontrols button { width: 46px; height: 30px; }
.tabs { display: flex; height: 26px; }
.tabs button { padding: 0 14px 2px 15px; height: 26px; }
.tabs .file { padding: 0 22px 2px 17px; }
.tabs .on { background: #f1f1f1; color: #1e6c45; padding: 0 13px 2px 14px; }
.tabs .tell { color: #a0c6b0; gap: 5px; }
.tabs .login { margin-left: auto; padding: 0 10px 2px; }
.tabs .share { background: #0d5132; padding: 0 19px 2px 7px; gap: 3px; height: 25px; }

/* ribbon */
.ribbon { display: flex; height: 95px; background: #f1f1f1; border-bottom: 1px solid #d2d2d2; padding: 3px 0 0; position: relative; }
.group { display: flex; flex-direction: column; flex: none; height: 88px; border-right: 1px solid #d0d0d0; }
.body { display: flex; height: 71px; }
.cap { position: relative; text-align: center; color: #555; height: 16px; margin-top: 3px; padding-right: 16px; }
.g5 .cap, .g6 .cap, .g7 .cap { padding-right: 0; }
.la { position: absolute; right: 4px; top: 5px; width: 8px; height: 8px; color: #777; }
.dimla { color: #bbb; }
.g1 { width: 117px; }
.g2 { width: 250px; }
.g3 { width: 239px; }
.g4 { width: 140px; }
.g5 { width: 189px; }
.g6 { width: 135px; }
.g6 .body { padding-left: 4px; }
.g7 { width: 229px; }
.big { flex-direction: column; justify-content: flex-start; padding-top: 4px; }
.big > svg:first-child { margin-bottom: 1px; }
.big > .dn { margin-top: 6px; }
.big > span { line-height: 15px; }
.big .second { display: flex; align-items: center; gap: 4px; padding-left: 4px; }
.paste { width: 50px; }
.b42 { width: 42px; }
.b56 { width: 56px; }
.b60 { width: 60px; }
.b65 { width: 65px; }
.b70 { width: 70px; }
.sorticon { display: flex; align-items: center; gap: 2px; height: 32px; margin-bottom: 1px; }
.az { display: flex; flex-direction: column; font-size: 14px; line-height: 14px; color: #3f78b4; }
.az b + b { color: #9260b3; }
.stack { display: flex; flex-direction: column; }
.stack button { height: 23px; justify-content: flex-start; gap: 3px; }
.stack .far { margin-left: 6px; }
.stack.wide { width: 94px; padding-left: 7px; }
.rows { flex-direction: column; padding: 5px 0 0 4px; gap: 4px; }
.line { display: flex; align-items: center; height: 28px; }
.off, .off .dn { color: #a3a3a3; }
.live, .live .dn { color: #444; }
.combo { display: flex; height: 23px; border: 1px solid #c6c6c6; background: #fdfdfd; }
.combo input { width: 100%; min-width: 0; padding-left: 2px; }
.combo i { width: 14px; flex: none; background: #e6e6e6; display: flex; align-items: center; justify-content: center; }
.combo.font { width: 157px; }
.combo.size { width: 40px; }
.combo.num { width: 131px; }
.w10 { width: 10px; } .w12 { width: 12px; } .w18 { width: 18px; } .w20 { width: 20px; } .w22 { width: 22px; } .w26 { width: 26px; }
.w44 { width: 44px; padding-right: 12px; }
.line b, .semi13 { font-size: 13px; font-weight: 700; }
.semi13 { font-weight: 600; }
.ital { font: italic 700 15px "Liberation Serif", serif; }
.semi { font-size: 15px; font-weight: 600; }
.grow { font-size: 15px; font-weight: 600; align-items: flex-start; margin-left: 6px; }
.grow svg { margin-top: 1px; }
.less { font-size: 13px; margin-left: 7px; }
.slant { transform: rotate(-45deg); font-size: 12px; line-height: 12px; }
.slantarrow { margin: 6px 4px 0 -6px; }
.sep { width: 1px; height: 24px; background: #d4d4d4; flex: none; }
.sep.tall { height: 28px; }
.m4 { margin: 0 4px; } .m5 { margin: 0 5px; } .m6 { margin: 0 6px; }
.txt { gap: 3px; padding-left: 3px; }
.txt .far { margin-left: 7px; }
.wen { flex-direction: column; }
.wen span { font-size: 9px; line-height: 8px; }
.wen em { font: 700 9px/10px "Noto Sans CJK SC", sans-serif; color: #3f78b4; }
.pct { font-size: 15px; }
.comma { font: 700 22px/10px "Liberation Serif", serif; padding-bottom: 10px; }
.dec { flex-direction: column; align-items: flex-end; font-size: 8px; line-height: 8px; padding-right: 2px; }
.dec span { display: flex; align-items: center; gap: 1px; }
.collapse { position: absolute; right: 10px; bottom: 5px; }

/* formula bar */
.formula { display: flex; height: 48px; padding: 10px 5px; color: #555; font-size: 14px; }
.formula > div { background: #fdfdfd; border: 1px solid #c9c9c9; display: flex; align-items: center; }
.formula input { flex: 1; min-width: 0; }
.namebox { width: 102px; padding: 0 5px 0 6px; }
.namebox input { font-size: 13px; }
.namebox svg { color: #777; }
.dots { width: 3px; height: 15px; background: radial-gradient(circle, #aaa 1px, transparent 2px) center / 5px 5px; align-self: center; margin: 0 14px 0 13px; }
.fx { width: 110px; justify-content: space-around; }
.fx .fn { font: italic 700 15px "Liberation Serif", serif; }
.fn sub { font-size: 11px; line-height: 8px; }
.entry { flex: 1; margin-left: 3px; padding: 0 3px 0 10px; }
.entry svg { color: #999; }

/* worksheet */
.work { flex: 1; min-height: 0; display: flex; }
.sheet { flex: 1; min-width: 0; overflow: hidden; background: #fff; border-right: 1px solid #ababab; border-bottom: 1px solid #ababab; position: relative; }
table { border-collapse: separate; border-spacing: 0; table-layout: fixed; width: 100%; min-width: 1413px; color: #111; }
.c0 { width: 29px; } .c1 { width: 65px; } .c2 { width: 72px; }
th, td { padding: 0; text-align: center; font-weight: 400; }
thead th { height: 19px; line-height: 17px; background: #e6e6e6; border-right: 1px solid #b5b5b5; border-bottom: 1px solid #ababab; }
thead th.sel { background: #d2d2d2; color: #215d42; border-bottom: 2px solid #2a6a4a; }
.corner svg { margin: 2px 0 0 15px; }
tbody tr { height: var(--h); }
.h28 { --h: 28px; } .h29 { --h: 29px; } .h19 { --h: 19px; } .h18 { --h: 18px; } .h14 { --h: 14px; } .h12 { --h: 12px; } .h9 { --h: 9px; } .h7 { --h: 7px; }
tbody th { background: #e6e6e6; border-right: 1px solid #ababab; border-bottom: 1px solid #c3c3c3; font-size: 13px; }
tbody th div { height: calc(var(--h) - 1px); overflow: hidden; display: flex; align-items: flex-end; justify-content: center; line-height: 16px; }
.pick th { background: #d2d2d2; color: #215d42; border-right: 2px solid #2a6a4a; }
td { font: 15px/18px "Noto Sans CJK SC", sans-serif; }
.title { background: #808080; color: #fff; font-size: 21px; line-height: 25px; font-weight: 700; border-bottom: 1px solid #000; }
.head td, .pick td, .data td { border-right: 1px solid #000; border-bottom: 1px solid #000; line-height: 25px; }
.head td { background: #ffd362; }
.pick td { background: #c6c6c6; }
.pick td.active { background: #fff; }
.data td.rest { background: #fe1a00; color: #5a0000; }
.head th + td, .pick th + td, .data th + td { background: #f9b282; }
.note { line-height: 16px; }
.method { line-height: 19px; font-weight: 500; white-space: nowrap; }
.method i { font: 700 13px/1px "Liberation Mono", monospace; }
.red { color: #d8301c; }
.selection { position: absolute; left: 92px; top: 73px; width: 457px; height: 143px; border: 2px solid #2a6a4a; box-shadow: inset 0 0 0 1px #fff; }
.vscroll { width: 21px; display: flex; flex-direction: column; padding: 2px 3px 0 2px; }
.vscroll button, .hscroll button { background: #fff; border: 1px solid #c0c0c0; width: 16px; height: 15px; flex: none; }
.vscroll .thumb { width: 16px; flex: 1; background: #fff; border: 1px solid #b5b5b5; margin-bottom: 23px; }

/* sheet tabs */
.sheets { display: flex; height: 28px; border-bottom: 1px solid #c6c6c6; font-size: 13px; }
.arrows { display: flex; width: 102px; padding-left: 27px; gap: 24px; border-right: 1px solid #aaa; margin-right: 1px; }
.st { height: 22px; margin-top: 3px; color: #fff; flex: none; padding-bottom: 3px; }
.s1 { width: 118px; background: #cc1300; }
.s2 { width: 149px; height: 24px; margin: 0 2px; padding: 1px 0 0; color: #217346; background: linear-gradient(#fff, #8fd0ad); border-bottom: 2px solid #217346; }
.s3 { width: 158px; background: #002060; }
.s4 { width: 117px; background: #0070c8; margin-left: 5px; }
.s5 { width: 136px; background: #fe1a00; margin-left: 6px; justify-content: flex-start; padding-left: 10px; overflow: hidden; }
.ell { width: 25px; color: #215d42; font-weight: 700; }
.add { margin: 0 18px 0 7px; }
.sheets .dots { margin: 0 14px 0 0; }
.hscroll { flex: 1; display: flex; align-items: center; margin-right: 21px; }
.hscroll .thumb { flex: 1; height: 15px; background: #fff; border: 1px solid #b5b5b5; margin-right: 26px; }

/* status bar */
.status { display: flex; height: 22px; background: #f1f1f1; align-items: center; padding: 0 9px 0 7px; color: #555; }
.macro { margin-left: 20px; }
.count { margin-left: auto; margin-right: 19px; }
.view { width: 38px; height: 22px; }
.view.on { background: #cacaca; }
.zoom { width: 15px; }
.range { appearance: none; width: 100px; height: 16px; background: linear-gradient(#aaa, #aaa) center / 100% 1px no-repeat; }
.range::-webkit-slider-thumb { appearance: none; width: 4px; height: 11px; background: #555; }
.pc { width: 44px; text-align: right; }

/* taskbar */
.taskbar { display: flex; height: 40px; background: #020308; color: #fff; }
.app { width: 49px; }
.task { justify-content: flex-start; gap: 6px; border-bottom: 2px solid #76aee0; height: 40px; }
.ocam { width: 152px; margin-left: 5px; padding-left: 7px; font-size: 13px; }
.excel { width: 160px; margin-left: 5px; background: #333438; padding-left: 11px; gap: 5px; }
.tray { margin-left: auto; display: flex; align-items: center; gap: 8px; margin-right: 4px; border-right: 1px solid #555; }
.wifi, .sogou { margin-left: 6px; }
.clock { display: flex; flex-direction: column; text-align: center; width: 117px; line-height: 17px; }

/* dialog */
.dialog { position: absolute; left: 367px; top: 185px; width: 577px; height: 481px; background: #f0f0f0; border: 1px solid #2b7fb5; color: #111; }
.dtitle { display: flex; height: 30px; background: #fff; align-items: center; padding: 0 17px 0 8px; }
.dtitle h2 { flex: 1; }
.help { font-size: 14px; width: 12px; font-weight: 600; margin-right: 34px; }
.dbody { padding: 14px 6px 0; }
.lab { padding-left: 1px; }
.lab.second { padding-top: 16px; }
.rules { list-style: none; border: 2px solid #6a6a6a; background: #fff; margin-top: 4px; padding: 2px 1px 0; }
.rules li { height: 22px; display: flex; align-items: center; gap: 5px; padding-left: 8px; border-bottom: 1px solid #eee; }
.rules .cur { background: #2a94fc; color: #fff; border-bottom: 0; }
.panel { border: 1px solid #777; background: #fff; margin-top: 4px; height: 198px; padding: 8px 10px 0 9px; }
.panel h3 { font-weight: 700; line-height: 17px; }
.stylerow { display: flex; gap: 11px; margin-top: 4px; line-height: 18px; }
.stylerow .pickbox { width: 135px; }
.pickbox { position: relative; display: block; height: 25px; border: 1px solid #a6a6a6; background: #fff; }
.pickbox select { appearance: none; width: 100%; height: 21px; padding-left: 3px; }
.pickbox i { position: absolute; right: 1px; top: 1px; bottom: 1px; width: 17px; pointer-events: none; }
.pickbox i, .color i { background: #e1e1e1; border: 1px solid #a6a6a6; color: #555; display: flex; align-items: center; justify-content: center; }
.form { display: grid; grid-template-columns: 53px 157px 1fr; grid-template-rows: 24px 25px 25px 18px; row-gap: 4px; align-items: center; }
.form .max { width: 157px; justify-self: end; }
.form .colhead { align-self: end; padding-left: 1px; }
.refbox { display: flex; height: 25px; border: 1px solid #a6a6a6; color: #777; }
.refbox input { flex: 1; min-width: 0; padding-left: 3px; }
.refbox button { width: 22px; background: #dfe4ec; border: 1px solid #a6a6a6; }
.color { width: 157px; height: 18px; border: 1px solid #a6a6a6; align-items: stretch; background: #fff; }
.color b { flex: 1; margin: 2px 1px; }
.color i { width: 20px; }
.orange { background: #ff7a22; }
.yellow { background: #ffe793; }
.preview { display: flex; align-items: center; gap: 3px; margin-top: 7px; }
.preview div { flex: 1; height: 25px; border: 1px solid #555; padding: 2px; }
.preview span { display: block; height: 100%; background: linear-gradient(90deg, #ff7a22, #ffe793); }
.actions { display: flex; justify-content: flex-end; gap: 11px; margin-top: 5px; padding-right: 7px; }
.actions button { width: 73px; height: 28px; background: #e1e1e1; border: 1px solid #a6a6a6; }
.actions .ok { border: 2px solid #1a72b8; }
.halo { position: absolute; left: 46px; top: 61px; width: 83px; height: 86px; border-radius: 50%; background: radial-gradient(closest-side, rgba(247, 232, 10, .8) 40%, rgba(247, 232, 10, .6) 85%, rgba(247, 232, 10, .3)); pointer-events: none; }
.cursor { position: absolute; left: 87px; top: 102px; pointer-events: none; }
```
